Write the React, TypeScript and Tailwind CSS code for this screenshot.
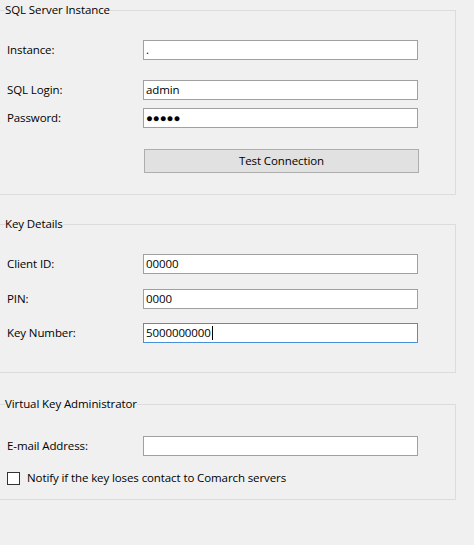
import React from "react";

const font = { fontFamily: '"Segoe UI", "Open Sans", "Noto Sans", sans-serif' };

function Field({ label, value, focused, caret, mt }: { label: string; value?: string; focused?: boolean; caret?: boolean; mt: string }) {
  return (
    <div className={`flex items-center ${mt}`}>
      <div className="w-[136px] shrink-0 text-[11.5px] leading-[16px] tracking-[-0.1px] text-black">{label}</div>
      <div
        className={`flex h-[20px] w-[275px] items-center bg-white pl-[2px] text-[11.5px] leading-[16px] tracking-[-0.1px] text-black border ${
          focused ? "border-[#4a90d9]" : "border-[#a0a0a0]"
        }`}
      >
        <span>{value}</span>
        {caret && <span className="ml-[1px] inline-block h-[14px] w-px bg-black" />}
      </div>
    </div>
  );
}

export default function App() {
  return (
    <div className="flex h-[545px] w-[474px] flex-col bg-[#f0f0f0] pt-[2px]" style={font}>
      <fieldset className="w-[456px] border-t border-r border-b border-l-0 border-[#dcdcdc] pl-[7px] pb-[21px]">
        <legend className="-ml-[2px] px-0 text-[11.5px] leading-[16px] tracking-[-0.1px] text-black">SQL Server Instance</legend>
        <Field label="Instance:" value="." mt="mt-[22px]" />
        <Field label="SQL Login:" value="admin" mt="mt-[20px]" />
        <Field label="Password:" value="●●●●●" mt="mt-[8px]" />
        <div className="mt-[21px] flex">
          <div className="w-[137px] shrink-0" />
          <div className="flex h-[24px] w-[275px] items-center justify-center border border-[#adadad] bg-[#e1e1e1] text-[11.5px] leading-[16px] tracking-[-0.1px] text-black">
            Test Connection
          </div>
        </div>
      </fieldset>

      <fieldset className="mt-[21px] w-[456px] border-t border-r border-b border-l-0 border-[#dcdcdc] pl-[7px] pb-[29px]">
        <legend className="-ml-[2px] px-0 text-[11.5px] leading-[16px] tracking-[-0.1px] text-black">Key Details</legend>
        <Field label="Client ID:" value="00000" mt="mt-[22px]" />
        <Field label="PIN:" value="0000" mt="mt-[15px]" />
        <Field label="Key Number:" value="5000000000" focused caret mt="mt-[14px]" />
      </fieldset>

      <fieldset className="mt-[23px] w-[456px] border-t border-r border-b border-l-0 border-[#dcdcdc] pl-[7px] pb-[13px]">
        <legend className="-ml-[2px] px-0 text-[11.5px] leading-[16px] tracking-[-0.1px] text-black">Virtual Key Administrator</legend>
        <Field label="E-mail Address:" value="" mt="mt-[24px]" />
        <div className="mt-[14px] flex items-center">
          <div className="h-[13px] w-[13px] shrink-0 border border-[#333333] bg-white" />
          <span className="ml-[7px] text-[11.5px] leading-[16px] tracking-[-0.1px] text-black">Notify if the key loses contact to Comarch servers</span>
        </div>
      </fieldset>
    </div>
  );
}
